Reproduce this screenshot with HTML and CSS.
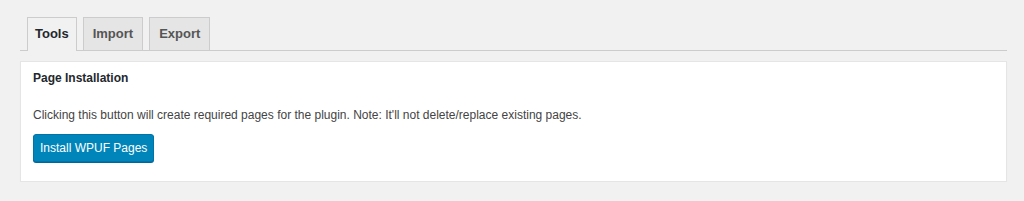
FILE: index.html
```html
<!DOCTYPE html>
<html lang="en">
<head>
  <meta charset="UTF-8" />
  <title>Tools</title>
  <link rel="stylesheet" href="styles.css">
</head>
<body>

  <div class="wrap">

    <!-- tabs -->
    <h2 class="nav-tab-wrapper">
      <a href="#" class="nav-tab nav-tab-active">Tools</a>
      <a href="#" class="nav-tab">Import</a>
      <a href="#" class="nav-tab">Export</a>
    </h2>

    <!-- page install box -->
    <div class="postbox">
      <h3 class="hndle">Page Installation</h3>
      <div class="inside">
        <p>Clicking this button will create required pages for the plugin. Note: It'll not delete/replace existing pages.</p>
        <a href="#" class="button-primary">Install WPUF Pages</a>
      </div>
    </div>

  </div>

</body>
</html>
```

FILE: styles.css
```css
html, body {
  margin: 0;
  background-color: #f1f1f1;
  font-family: 'Liberation Sans', Arial, sans-serif;
  font-size: 12px;
  color: #444;
}

.wrap {
  padding: 17px 17px 0 20px;
}

.nav-tab-wrapper {
  display: flex;
  align-items: flex-start;
  height: 33px;
  margin: 0;
  padding-left: 7px;
  border-bottom: 1px solid #ccc;
  font-size: 13px;
}

.nav-tab {
  display: block;
  height: 33px;
  box-sizing: border-box;
  padding: 0 9px;
  margin-right: 6px;
  line-height: 31px;
  font-weight: bold;
  color: #555;
  text-decoration: none;
  background-color: #e5e5e5;
  border: 1px solid #ccc;
  border-bottom: none;
}

.nav-tab-active {
  height: 34px;
  padding: 0 7px;
  background-color: #f1f1f1;
  color: #23282d;
}

.postbox {
  margin-top: 10px;
  background-color: #fff;
  border: 1px solid #e5e5e5;
  box-shadow: 0 1px 1px rgba(0,0,0,0.04);
}

.hndle {
  margin: 0;
  padding: 7px 12px 6px;
  font-size: 12px;
  line-height: 19px;
  font-weight: bold;
  color: #23282d;
}

.inside {
  padding: 0 12px 19px;
}

.inside p {
  margin: 12px 0 9px;
  line-height: 19px;
}

.button-primary {
  display: inline-block;
  height: 28px;
  line-height: 26px;
  padding: 0 6px;
  box-sizing: border-box;
  vertical-align: top;
  font-size: 12px;
  color: #fff;
  text-decoration: none;
  background-color: #0085ba;
  border: 1px solid #0073aa;
  border-radius: 3px;
  box-shadow: 0 1px 0 #006799;
}
```
